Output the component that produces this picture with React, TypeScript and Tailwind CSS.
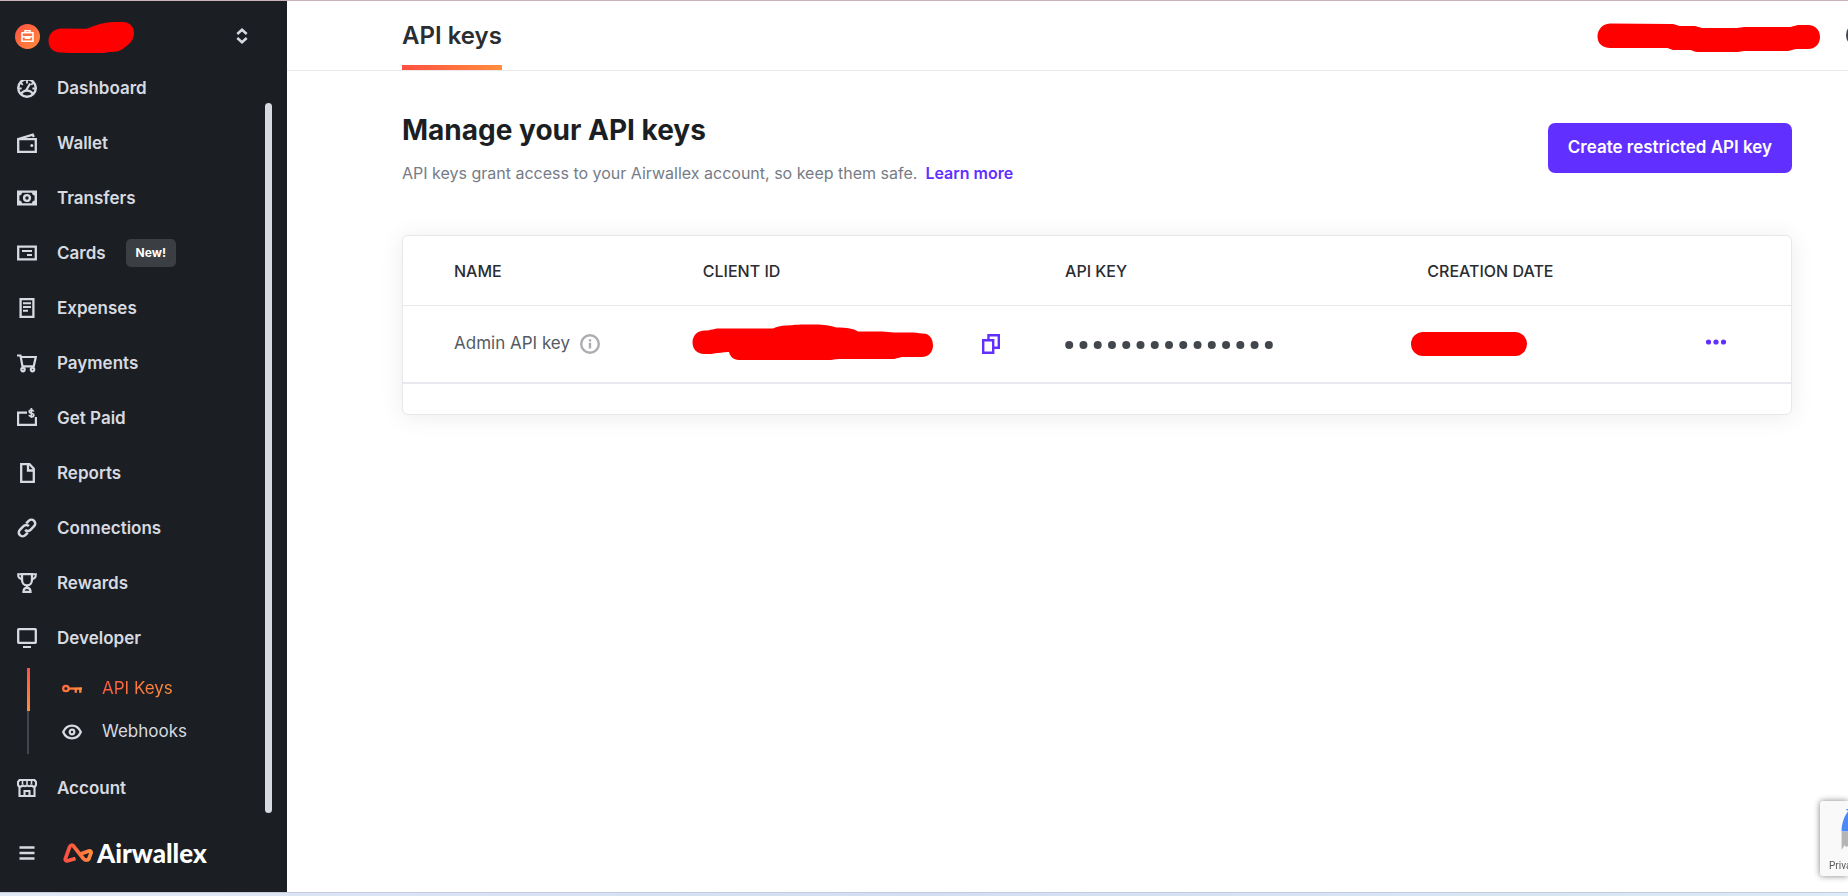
import React from "react";

type Kind = "dashboard" | "wallet" | "transfers" | "cards" | "expenses" | "payments" | "getpaid" | "reports" | "connections" | "rewards" | "developer" | "account";

const shapes: Record<Kind, React.ReactNode> = {
  dashboard: (
    <g>
      <circle cx="10" cy="10" r="8.8" fill="none" stroke="currentColor" strokeWidth="2.400" />
      <path d="M10 1v4.500M3.200 4.200l2.600 2.600M16.800 4.200l-2.600 2.600M1 10.500h3.600M19 10.500h-3.600" stroke="currentColor" strokeWidth="1.900" fill="none" />
      <path d="M9 12.500L13.200 5.500" stroke="currentColor" strokeWidth="2.200" fill="none" />
      <path d="M4 16.500c1-2.600 3.400-3.800 6-3.800s5 1.200 6 3.800" stroke="currentColor" strokeWidth="2.200" fill="none" />
    </g>
  ),
  wallet: (
    <g fill="none" stroke="currentColor" strokeWidth="2.300">
      <path d="M1.200 6.200h17.600v12.600H1.200z" />
      <path d="M1.200 6L15.800 1.600l1 2.400" />
      <circle cx="14.800" cy="12.500" r="1.500" fill="currentColor" stroke="none" />
    </g>
  ),
  transfers: (
    <g>
      <path fillRule="evenodd" fill="currentColor" d="M0 2.500h20v15H0zM5 4.700c0 1.500-1.200 2.700-2.600 2.700v5.200c1.400 0 2.600 1.200 2.600 2.700h10c0-1.500 1.200-2.700 2.600-2.700V7.400c-1.400 0-2.600-1.200-2.600-2.700z" />
      <circle cx="10" cy="10" r="2.900" fill="none" stroke="currentColor" strokeWidth="2.400" />
    </g>
  ),
  cards: (
    <g fill="none" stroke="currentColor" strokeWidth="2.300">
      <path d="M1.200 3.700h17.600v12.600H1.200z" />
      <path d="M5 8h10M10 12h5" strokeWidth="2" />
    </g>
  ),
  expenses: (
    <g fill="none" stroke="currentColor" strokeWidth="2.300">
      <path d="M3.600 1.200h12.800v17.600H3.600z" />
      <path d="M6 5.200h8M6 9h8M6 12.700h5" strokeWidth="1.900" />
    </g>
  ),
  payments: (
    <g fill="none" stroke="currentColor" strokeWidth="2.200">
      <path d="M0 2.500h3.500L5.500 13.300h11.200L18.800 4H4" />
      <circle cx="6" cy="16.600" r="1.700" />
      <circle cx="15.500" cy="16.600" r="1.700" />
    </g>
  ),
  getpaid: (
    <g fill="none" stroke="currentColor" strokeWidth="2.200">
      <path d="M10 4.600H1.100V16.900h17.800V9" />
      <path d="M16.700 3.500c-.4-1-1.300-1.300-2.300-1.300-1.300 0-2.200.6-2.200 1.600 0 2.200 4.700.8 4.700 3.100 0 1-1 1.700-2.400 1.700-1.200 0-2.200-.5-2.500-1.500M14.400 0v10" strokeWidth="1.700" />
    </g>
  ),
  reports: (
    <g fill="none" stroke="currentColor" strokeWidth="2.300">
      <path d="M4.200 1.200h8.300L16.800 5.700v13.100H4.200z" />
      <path d="M11 1v6.500h6" />
    </g>
  ),
  connections: (
    <g fill="none" stroke="currentColor" strokeWidth="2.500">
      <path d="M9.200 5.300l2.500-2.500a3.700 3.700 0 0 1 5.400 5.400l-3.600 3.600a3.700 3.700 0 0 1-5.400 0" />
      <path d="M10.800 14.700l-2.500 2.500a3.700 3.700 0 0 1-5.400-5.400l3.600-3.600a3.700 3.700 0 0 1 5.400 0" />
    </g>
  ),
  rewards: (
    <g fill="none" stroke="currentColor" strokeWidth="2.300">
      <path d="M5 1.200h10v5.300c0 3.500-2 6-5 6s-5-2.500-5-6z" />
      <path d="M5 1.200H1.100c0 3 1.400 4.800 4.400 4.800M15 1.200h3.900c0 3-1.400 4.800-4.400 4.800" strokeWidth="2" />
      <path d="M10 12v3M6.500 18.800c0-2.500 1.200-4 3.500-4s3.500 1.500 3.500 4z" />
    </g>
  ),
  developer: (
    <g fill="none" stroke="currentColor" strokeWidth="2.300">
      <rect x="1.200" y="1.200" width="17.600" height="13.600" rx="0.500" />
      <path d="M6 19h8" strokeWidth="2" />
    </g>
  ),
  account: (
    <g fill="none" stroke="currentColor" strokeWidth="2.100">
      <path d="M2.500 2h15L19 4v2.200a2.200 2.200 0 0 1-4.500.3 2.300 2.300 0 0 1-4.500 0 2.300 2.300 0 0 1-4.500 0A2.200 2.200 0 0 1 1 6.200V4z" />
      <path d="M5.500 2v4M10 2v4M14.500 2v4" strokeWidth="1.600" />
      <path d="M2.500 8.500V18h15V8.500M7.500 18v-5h5v5" />
    </g>
  ),
};

function NavIcon({ kind }: { kind: Kind }) {
  return (
    <svg className="size-5 shrink-0" viewBox="0 0 20 20" aria-hidden="true">
      {shapes[kind]}
    </svg>
  );
}

function NavItem({ kind, label, badge }: { kind: Kind; label: string; badge?: string }) {
  return (
    <a href="#" className="flex h-[55px] shrink-0 items-center pt-px pl-[17px] leading-4 font-semibold">
      <NavIcon kind={kind} />
      <span className="ml-5">{label}</span>
      {badge && (
        <span className="ml-5 flex h-7 items-center rounded-[5px] bg-[#3b3f43] px-[10px] text-xs font-bold text-white">{badge}</span>
      )}
    </a>
  );
}

const primary: { kind: Kind; label: string; badge?: string }[] = [
  { kind: "dashboard", label: "Dashboard" },
  { kind: "wallet", label: "Wallet" },
  { kind: "transfers", label: "Transfers" },
  { kind: "cards", label: "Cards", badge: "New!" },
  { kind: "expenses", label: "Expenses" },
  { kind: "payments", label: "Payments" },
  { kind: "getpaid", label: "Get Paid" },
  { kind: "reports", label: "Reports" },
  { kind: "connections", label: "Connections" },
  { kind: "rewards", label: "Rewards" },
  { kind: "developer", label: "Developer" },
];

function Sidebar() {
  return (
    <aside className="flex w-[287px] shrink-0 flex-col bg-[#1b1f23] text-[17px] text-[#d7dae0]">
      <button type="button" aria-label="Switch account" className="flex h-[79px] shrink-0 items-start pt-[20px] pl-[15px] text-left">
        <svg className="mt-[3px] size-[25px]" viewBox="0 0 25 25" aria-hidden="true">
          <defs>
            <linearGradient id="avatar" x1="0" y1="0" x2="1" y2="1">
              <stop offset="0" stopColor="#ff4f42" />
              <stop offset="1" stopColor="#ff8e3c" />
            </linearGradient>
          </defs>
          <circle cx="12.500" cy="12.500" r="12.500" fill="url(#avatar)" />
          <path d="M7 8.800h11v8.400H7zM10 8.800V6.800h5v2M7 12.700h11M10.500 12.700v1.600h4v-1.600" fill="none" stroke="#fff" strokeWidth="1.500" />
        </svg>
        <svg className="ml-2 h-[33px] w-[87px]" viewBox="0 0 87 33" aria-hidden="true">
          <path d="M12 31.500C5 31.500.5 26.500.5 20S5 8 13 7.500l25 .3C47 5 54 1 66 1h9c7 0 11 5 11 11 0 8-6 12-10 15-4 3-7 4-15 4l-5 1H23z" fill="#f00" />
        </svg>
        <svg className="mt-[7px] ml-[101px] h-4 w-[12px]" viewBox="0 0 12 16" aria-hidden="true">
          <path d="M1.300 6L6 1.800 10.700 6M1.300 10L6 14.200 10.700 10" fill="none" stroke="#d7dae0" strokeWidth="2.500" />
        </svg>
      </button>

      <div className="flex min-h-0 flex-1">
        <nav aria-label="Main" className="flex flex-1 flex-col overflow-hidden">
          <div className="-mt-5 flex flex-col">
            {primary.map((item) => (
              <NavItem key={item.label} {...item} />
            ))}
            <div className="mt-[3px] flex flex-col pl-[27px]">
              <a href="#" aria-current="page" className="flex h-[43px]">
                <span className="w-[3px] bg-linear-to-b from-[#ff4f42] to-[#ff8e3c]" />
                <span className="flex items-center pb-px pl-8">
                  <svg className="size-5" viewBox="0 0 20 20" aria-hidden="true">
                    <defs>
                      <linearGradient id="key" gradientUnits="userSpaceOnUse" x1="0" y1="0" x2="20" y2="0">
                        <stop offset="0" stopColor="#ff6a3f" />
                        <stop offset="1" stopColor="#ff8e3c" />
                      </linearGradient>
                    </defs>
                    <g fill="none" stroke="url(#key)" strokeWidth="2.300">
                      <circle cx="3.900" cy="9.500" r="2.700" />
                      <path d="M6.500 9.600L20 9.500M18.300 9.500v4.300M13.800 9.500v4.300" />
                    </g>
                  </svg>
                  <span className="ml-5 bg-linear-to-r from-[#ff5a41] to-[#ff8e3c] bg-clip-text text-transparent">API Keys</span>
                </span>
              </a>
              <a href="#" className="flex h-[43px]">
                <span className="mr-px w-[2px] bg-[#42474d]" />
                <span className="flex items-center pb-px pl-8">
                  <svg className="size-5" viewBox="0 0 20 20" aria-hidden="true">
                    <path d="M1.200 10C3 5.800 6 3.700 10 3.700s7 2.100 8.800 6.300c-1.800 4.200-4.800 6.300-8.800 6.300S3 14.200 1.200 10z" fill="none" stroke="currentColor" strokeWidth="2.300" />
                    <circle cx="10" cy="10" r="2.300" fill="none" stroke="currentColor" strokeWidth="2.200" />
                  </svg>
                  <span className="ml-5">Webhooks</span>
                </span>
              </a>
            </div>
            <div className="mt-[6px]">
              <NavItem kind="account" label="Account" />
            </div>
          </div>
        </nav>
        <div className="mt-[23px] mr-[15px] h-[710px] w-[7px] shrink-0 rounded-full bg-[#d7dae0]" />
      </div>

      <div className="flex h-[78px] shrink-0 items-center pl-[19px]">
        <button type="button" aria-label="Collapse menu">
          <svg className="h-4 w-4" viewBox="0 0 16 16" aria-hidden="true">
            <path d="M.5 2.500h15M.5 8h15M.5 13.500h15" stroke="#d7dae0" strokeWidth="2.500" />
          </svg>
        </button>
        <a href="#" className="ml-7 flex items-center gap-1 text-[26px] leading-8 text-white">
          <svg className="h-5 w-[30px]" viewBox="0 0 30 20" aria-hidden="true">
            <defs>
              <linearGradient id="mark" gradientUnits="userSpaceOnUse" x1="0" y1="0" x2="30" y2="0">
                <stop offset="0.100" stopColor="#ff4f42" />
                <stop offset="1" stopColor="#ff8e3c" />
              </linearGradient>
            </defs>
            <path d="M12.500 15.500L4.800 17.800C3 18.300 1.900 17.200 2.400 15.600L6.600 4C7.300 1.900 9.300 1.600 10.700 3.300L20.300 15.500C22 17.800 25.300 17.500 26.200 14.800L28 10.200C28.500 8.700 27.300 7.600 25.800 8L17.500 11" fill="none" stroke="url(#mark)" strokeWidth="3.700" strokeLinejoin="round" />
          </svg>
          <span className="font-['Lato',sans-serif] font-black">Airwallex</span>
        </a>
      </div>
    </aside>
  );
}

function Header() {
  return (
    <header className="flex h-[70px] shrink-0 items-stretch justify-between border-b border-[#e8e8ea] pl-[115px]">
      <h1 className="flex items-center border-b-5 border-transparent pt-[5px] text-2xl font-semibold text-[#2a2d31] [border-image:linear-gradient(to_right,#ff4f42,#ff8e3c)_1]">
        API keys
      </h1>
      <div className="flex items-start">
        <svg className="mt-[22px] h-[31px] w-[224px]" viewBox="0 0 224 31" aria-hidden="true">
          <path d="M13 .5L74 1c5 0 6 2 10 2h12c5 0 6 2 11 2h33l7-1h44c6 0 6-2 13-2h7c8 0 12 6 12 12s-4 12-12 12h-12l-8 2h-44l-6 1H101c-4 0-6-2-8-2H78c-5 0-5-2-9-2H15C5 25.500.5 20 .5 13.500S5 1 13 .5z" fill="#f00" />
        </svg>
        <button type="button" aria-label="Help" className="mt-[22px] ml-[25px] w-[2px] overflow-hidden">
          <svg className="size-6" viewBox="0 0 24 24" aria-hidden="true">
            <circle cx="12" cy="12" r="10.800" fill="none" stroke="#42474d" strokeWidth="2.400" />
          </svg>
        </button>
      </div>
    </header>
  );
}

const dots = Array.from({ length: 15 }, (_, i) => i);

function KeysTable() {
  return (
    <section className="mt-[50px] rounded-md border border-[#e8e8ea] bg-white pb-[30px] shadow-[0_2px_24px_rgba(0,0,0,0.08)]">
      <table className="w-full table-fixed border-separate border-spacing-0 text-left">
        <colgroup>
          <col className="w-[21.600%]" />
          <col className="w-[26.100%]" />
          <col className="w-[26.100%]" />
          <col />
          <col className="w-[9%]" />
        </colgroup>
        <thead>
          <tr className="text-base text-[#2a2d31] *:h-[70px] *:border-b *:border-[#e8e8ea] *:font-medium">
            <th scope="col" className="pl-[51px]">NAME</th>
            <th scope="col">CLIENT ID</th>
            <th scope="col">API KEY</th>
            <th scope="col">CREATION DATE</th>
            <th scope="col" aria-label="Actions" />
          </tr>
        </thead>
        <tbody>
          <tr className="text-[17px] text-[#545b63] *:h-[78px] *:border-b-2 *:border-[#e8e9ef]">
            <td className="pl-[51px]">
              <div className="flex items-center gap-[10px]">
                Admin API key
                <svg className="size-5" viewBox="0 0 20 20" aria-hidden="true">
                  <circle cx="10" cy="10" r="8.800" fill="none" stroke="#abadb2" strokeWidth="2.400" />
                  <path d="M10 8.800v5.700M10 5.200v2.200" stroke="#abadb2" strokeWidth="2.400" />
                </svg>
              </div>
            </td>
            <td>
              <div className="-ml-[11px] flex items-center justify-between pr-[64px]">
                <svg className="mb-1 h-[37px] w-[242px]" viewBox="0 0 242 37" aria-hidden="true">
                  <path d="M13 6.500c6 0 9-2 14-2h54c6-3 13-3 19-3.200 5-.9 10-.8 24-.8 7 0 15 1 20 3 12 0 17 1 22 4h24c5 0 8 1 12 1h18c5 0 7 1 11 1 7 0 10 6 10 12s-4 11.500-11 11.500h-18c-5 0-7 2-12 2h-52c-5 0-7 1-10 1H47c-6 0-9-4-10-8-6 0-7 1-12 1l-6 1h-7C5 30 .5 25 .5 18.500S5 6.500 13 6.500z" fill="#f00" />
                </svg>
                <button type="button" aria-label="Copy client ID">
                  <svg className="block size-5" viewBox="0 0 20 20" aria-hidden="true">
                    <path d="M2.200 6.200h10v12.600h-10zM7.500 6V1.200h10.300v12.600h-5.600" fill="none" stroke="#612fff" strokeWidth="2.400" />
                  </svg>
                </button>
              </div>
            </td>
            <td>
              <svg className="mt-[2px] block h-2 w-[208px]" viewBox="0 0 208 8" role="img" aria-label="Hidden API key">
                {dots.map((i) => (
                  <circle key={i} cx={4.200 + i * 14.260} cy="4" r="4" fill="#42474d" />
                ))}
              </svg>
            </td>
            <td>
              <div className="-ml-4 h-6 w-[116px] rounded-full bg-[#f00]" />
            </td>
            <td>
              <button type="button" aria-label="More actions" className="ml-10 block">
                <svg className="h-3 w-5" viewBox="0 0 20 12" aria-hidden="true">
                  <g fill="#612fff">
                    <circle cx="2.500" cy="4" r="2.600" />
                    <circle cx="10" cy="4" r="2.600" />
                    <circle cx="17.500" cy="4" r="2.600" />
                  </g>
                </svg>
              </button>
            </td>
          </tr>
        </tbody>
      </table>
    </section>
  );
}

export default function App() {
  return (
    <div className="flex h-screen flex-col overflow-hidden border-t border-[#c9b2ba] bg-white font-['Inter','Liberation_Sans',sans-serif]">
      <div className="flex min-h-0 flex-1">
        <Sidebar />
        <div className="flex min-w-0 flex-1 flex-col">
          <Header />
          <main className="pr-14 pl-[115px]">
            <div className="flex items-center justify-between pt-[39px]">
              <div>
                <h2 className="text-[28px] leading-10 font-bold text-[#1b1f23]">Manage your API keys</h2>
                <p className="mt-[11px] text-base leading-6 text-[#757c85]">
                  API keys grant access to your Airwallex account, so keep them safe.
                  <a href="#" className="ml-2 font-semibold text-[#612fff]">Learn more</a>
                </p>
              </div>
              <button type="button" className="h-[50px] rounded-[7px] bg-[#612fff] px-5 text-[17px] font-semibold text-white">
                Create restricted API key
              </button>
            </div>
            <KeysTable />
          </main>
        </div>
      </div>
      <div className="h-1 shrink-0 border-t border-[#c3cbdd] bg-linear-to-r from-[#dfe8f5] via-[#d3def3] to-[#dcebf5]" />
      <aside aria-label="reCAPTCHA" className="fixed right-0 bottom-5 flex h-[75px] w-7 flex-col overflow-hidden rounded-l-[3px] bg-[#f9f9f9] shadow-[0_0_6px_#808080]">
        <svg className="mt-2 ml-[21px] h-[44px] w-[50px]" viewBox="0 0 50 44" aria-hidden="true">
          <path d="M0 23C0 13 4 5 7 2L4 0h12v23z" fill="#4a8af4" />
          <path d="M0 23h16v20l-6-7-5 3-2-2-3 5z" fill="#b5b5b5" />
        </svg>
        <span className="mt-1 ml-[9px] font-['Roboto',sans-serif] text-[10px] leading-5 whitespace-nowrap text-[#555]">Privacy - Terms</span>
      </aside>
    </div>
  );
}
